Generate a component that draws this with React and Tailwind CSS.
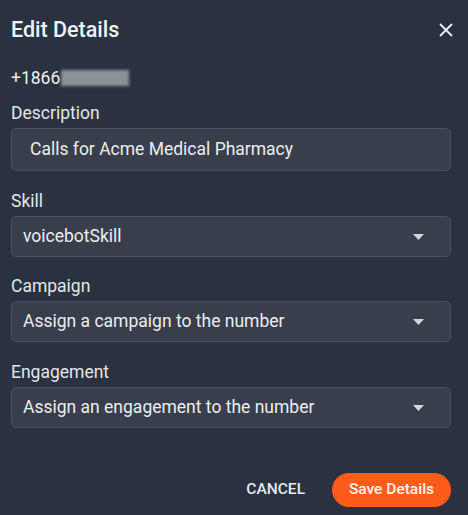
import React from 'react';

const Caret = () => (
    <svg width="11" height="6" viewBox="0 0 11 6" className="shrink-0">
        <path d="M0 0 L11 0 L5.5 6 Z" fill="#d4d6db" />
    </svg>
);

const SelectField = ({ label, value, className }) => (
    <div className={className}>
        <div className="text-[17.5px] leading-[22px] text-[#e4e6ea]">{label}</div>
        <div className="mt-[4px] flex h-[41px] items-center justify-between rounded-[5px] border border-[#4a505d] bg-[#383e4b] pl-[11px] pr-[26px]">
            <span className="text-[17.5px] text-[#eceef1]">{value}</span>
            <Caret />
        </div>
    </div>
);

const App = () => {
    return (
        <div className="w-[468px] h-[515px] bg-[#2a3140] pt-[16px] pl-[11px] pr-[17px] text-white" style={{ fontFamily: 'Roboto, "Liberation Sans", sans-serif' }}>
            <div className="flex h-[28px] items-center justify-between">
                <h1 className="text-[21.5px] font-medium leading-7 text-[#f1f2f4]">Edit Details</h1>
                <svg width="14" height="14" viewBox="0 0 14 14" className="-mr-[2px]">
                    <path d="M1 1 L13 13 M13 1 L1 13" stroke="#eef0f3" strokeWidth="1.8" />
                </svg>
            </div>

            <div className="mt-[23px] flex h-[22px] items-center">
                <span className="text-[17.5px] leading-[22px] text-[#eceef1]">+1866</span>
                <span className="ml-[1px] h-[16px] w-[68px] bg-[#8b909a] blur-[1.5px]"></span>
            </div>

            <div className="mt-[13px] text-[17.5px] leading-[22px] text-[#e4e6ea]">Description</div>
            <div className="mt-[4px] flex h-[43px] items-center rounded-[5px] border border-[#4a505d] bg-[#383e4b] pl-[18px]">
                <span className="text-[17.5px] text-[#eceef1]">Calls for Acme Medical Pharmacy</span>
            </div>

            <SelectField label="Skill" value="voicebotSkill" className="mt-[19px]" />
            <SelectField label="Campaign" value="Assign a campaign to the number" className="mt-[18px]" />
            <SelectField label="Engagement" value="Assign an engagement to the number" className="mt-[19px]" />

            <div className="mt-[45px] flex items-center justify-end gap-[27px]">
                <button className="text-[15.5px] font-medium text-[#e8eaee]">CANCEL</button>
                <button className="h-[34px] w-[119px] rounded-full bg-[#ff5c1b] text-[15.5px] font-medium text-[#fff4ee]">Save Details</button>
            </div>
        </div>
    );
};

export default App;
